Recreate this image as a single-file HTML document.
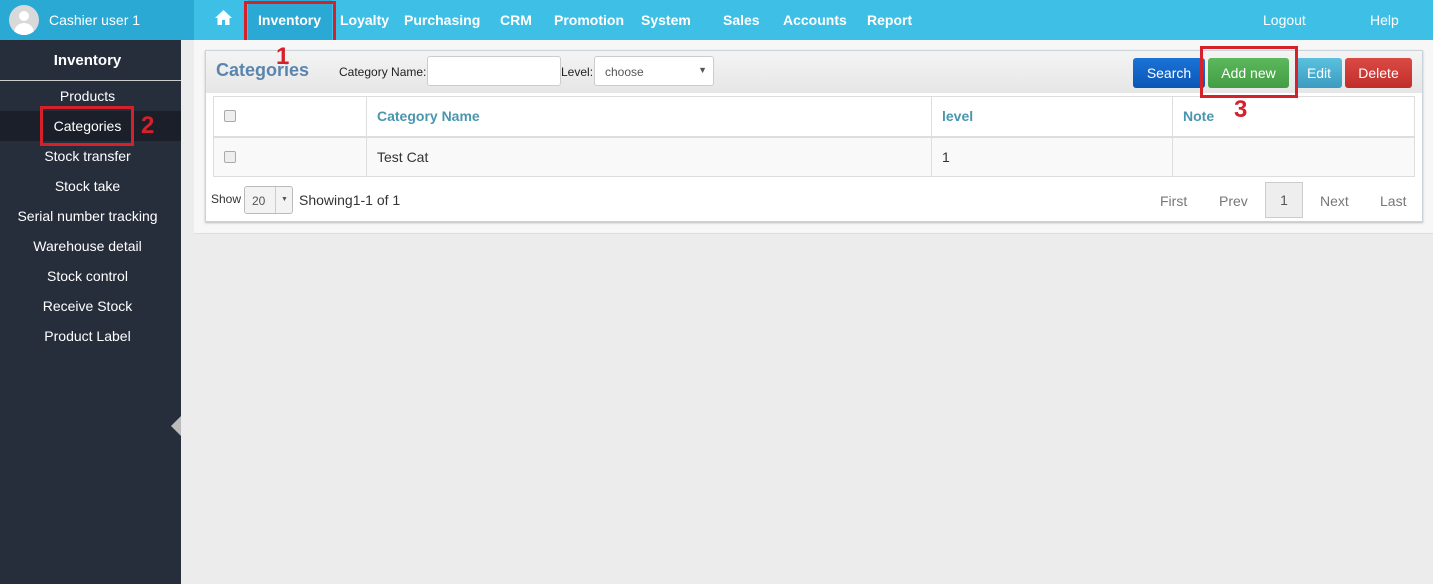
<!DOCTYPE html><html><head><style>
*{box-sizing:border-box;margin:0;padding:0}
body{width:1433px;height:584px;overflow:hidden;background:#ececec;font-family:"Liberation Sans",Arial,sans-serif;position:relative}
.top{position:absolute;left:0;top:0;width:1433px;height:40px;background:#3ec0e6}
.topl{position:absolute;left:0;top:0;width:194px;height:40px;background:#2ba9d5}
.av{position:absolute;left:9px;top:5px;width:30px;height:30px;border-radius:50%;background:#d9d9d9;overflow:hidden}
.av:before{content:"";position:absolute;left:10px;top:6px;width:10px;height:10px;border-radius:50%;background:#fff}
.av:after{content:"";position:absolute;left:5px;top:18px;width:20px;height:14px;border-radius:10px 10px 0 0;background:#fff}
.t{position:absolute;color:#fff;font-size:14px;top:12px;font-weight:bold}
.side{position:absolute;left:0;top:40px;width:181px;height:544px;background:#262d3b}
.si{position:absolute;left:0;width:175px;text-align:center;color:#fff;font-size:14px}
.red{position:absolute;border:3px solid #d6202a}
.num{position:absolute;color:#d6202a;font-weight:bold;font-size:24px}
.wrap{position:absolute;left:194px;top:40px;width:1239px;height:194px;background:#f7f7f7;border-bottom:1px solid #ddd}
.panel{position:absolute;left:205px;top:50px;width:1218px;height:172px;background:#fff;border:1px solid #c9d3da;box-shadow:0 1px 2px #bbb}
.ph{position:absolute;left:0;top:0;width:100%;height:42px;background:linear-gradient(#f4f4f4,#e6e6e6)}
.btn{position:absolute;top:7px;height:30px;color:#fff;font-size:14px;text-align:center;line-height:30px;border-radius:3px}
table{position:absolute;left:7px;top:45px;width:1202px;border-collapse:collapse;border:1px solid #ddd}
td{border:1px solid #ddd;height:40px;font-size:14px;padding-left:10px;color:#333}
th{border:1px solid #ddd;border-bottom:2px solid #ddd;height:40px;text-align:left;padding-left:10px;color:#4a96ae;font-size:14px}
.cb{width:12px;height:12px;border:1px solid #aaa;border-radius:2px;background:#eee}
.pg{position:absolute;top:142px;font-size:14px;color:#777}
</style></head><body>
<div class="top"></div><div class="topl"></div>
<div class="av"></div>
<div class="t" style="left:49px;font-weight:normal">Cashier user 1</div>
<svg style="position:absolute;left:215px;top:10px" width="17" height="15" viewBox="0 0 17 15"><path d="M8.5 0L0 8h2.5v7h4.5v-5h3v5h4.5V8H17z" fill="#fff"/></svg>
<div style="position:absolute;left:248px;top:0;width:84px;height:40px;background:#2ba9d5"></div>
<div class="t" style="left:258px">Inventory</div>
<div class="t" style="left:340px">Loyalty</div>
<div class="t" style="left:404px;width:76px;overflow:hidden;white-space:nowrap">Purchasing</div>
<div class="t" style="left:500px">CRM</div>
<div class="t" style="left:554px">Promotion</div>
<div class="t" style="left:641px">System</div>
<div class="t" style="left:723px">Sales</div>
<div class="t" style="left:783px">Accounts</div>
<div class="t" style="left:867px">Report</div>
<div class="t" style="left:1263px;font-weight:normal">Logout</div>
<div class="t" style="left:1370px;font-weight:normal">Help</div>
<div class="red" style="left:244px;top:1px;width:92px;height:42px"></div>
<div class="side"></div>
<div class="si" style="top:52px;font-weight:bold;font-size:15px">Inventory</div>
<div style="position:absolute;left:0;top:80px;width:181px;height:1px;background:#ccc"></div>
<div class="si" style="top:88px">Products</div>
<div style="position:absolute;left:0;top:111px;width:181px;height:30px;background:#1a1f29"></div>
<div class="si" style="top:118px">Categories</div>
<div class="si" style="top:148px">Stock transfer</div>
<div class="si" style="top:178px">Stock take</div>
<div class="si" style="top:208px">Serial number tracking</div>
<div class="si" style="top:238px">Warehouse detail</div>
<div class="si" style="top:268px">Stock control</div>
<div class="si" style="top:298px">Receive Stock</div>
<div class="si" style="top:328px">Product Label</div>
<div style="position:absolute;left:171px;top:416px;border:10px solid transparent;border-right:10px solid #bbb;border-left:0"></div>
<div class="red" style="left:40px;top:106px;width:94px;height:40px"></div>
<div class="num" style="left:141px;top:112px">2</div>
<div class="wrap"></div>
<div class="panel">
<div class="ph"></div>
<div style="position:absolute;left:10px;top:9px;font-size:18px;font-weight:bold;color:#5a86ae">Categories</div>
<div style="position:absolute;left:133px;top:14px;font-size:12px;color:#222">Category Name:</div>
<div style="position:absolute;left:221px;top:5px;width:134px;height:30px;background:#fff;border:1px solid #ccc;border-radius:3px"></div>
<div style="position:absolute;left:355px;top:14px;font-size:12px;color:#222">Level:</div>
<div style="position:absolute;left:388px;top:5px;width:120px;height:30px;background:#fff;border:1px solid #ccc;border-radius:3px;font-size:12px;color:#555;padding:8px 10px">choose<span style="position:absolute;right:6px;top:8px;font-size:9px">▼</span></div>
<div class="btn" style="left:927px;width:72px;background:linear-gradient(#1a73d6,#0a56b8)">Search</div>
<div class="btn" style="left:1002px;width:81px;background:linear-gradient(#5cb85c,#449d44)">Add new</div>
<div class="btn" style="left:1090px;width:46px;background:linear-gradient(#5bc0de,#3a9cc0)">Edit</div>
<div class="btn" style="left:1139px;width:67px;background:linear-gradient(#da4a45,#c12e2a)">Delete</div>
<table><tr><th style="width:153px"><div class="cb"></div></th><th style="width:565px">Category Name</th><th style="width:241px">level</th><th>Note</th></tr>
<tr style="background:#f9f9f9"><td><div class="cb"></div></td><td>Test Cat</td><td>1</td><td></td></tr></table>
<div style="position:absolute;left:5px;top:141px;font-size:12px;color:#333">Show</div>
<div style="position:absolute;left:38px;top:135px;width:49px;height:28px;border:1px solid #bbb;border-radius:3px;background:#f3f3f3;font-size:12px;color:#555;padding:7px 7px">20<span style="position:absolute;left:30px;top:0;width:18px;height:26px;border-left:1px solid #ccc;font-size:7px;padding:9px 5px">▼</span></div>
<div style="position:absolute;left:93px;top:141px;font-size:14px;color:#333">Showing1-1 of 1</div>
<div class="pg" style="left:954px">First</div>
<div class="pg" style="left:1013px">Prev</div>
<div style="position:absolute;left:1059px;top:131px;width:38px;height:36px;border:1px solid #ccc;background:#eee;text-align:center;line-height:34px;font-size:14px;color:#555">1</div>
<div class="pg" style="left:1114px">Next</div>
<div class="pg" style="left:1174px">Last</div>
</div>
<div class="num" style="left:276px;top:43px">1</div>
<div class="red" style="left:1200px;top:46px;width:98px;height:52px"></div>
<div class="num" style="left:1234px;top:96px">3</div>
</body></html>
